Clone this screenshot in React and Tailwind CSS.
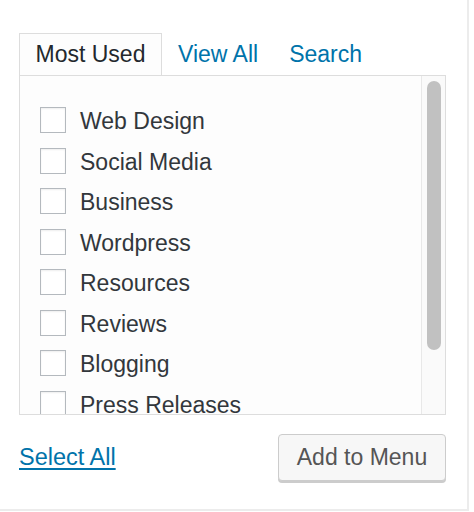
const items = ['Web Design', 'Social Media', 'Business', 'Wordpress', 'Resources', 'Reviews', 'Blogging', 'Press Releases']

export default function App() {
  return (
    <div
      className="w-[467px] h-[509px] bg-white border-r-2 border-b-2 border-[#ececec] box-content"
      style={{ fontFamily: '"Liberation Sans", Arial, sans-serif' }}
    >
      <div className="pt-[34px] pl-[19px] w-[446px]">
        {/* Tabs */}
        <div className="flex items-end h-[41px] text-[23px]">
          <div className="h-[42px] w-[143px] bg-[#fdfdfd] border border-b-0 border-[#dddddd] flex items-center justify-center text-[#23282d] relative z-10">
            Most Used
          </div>
          <div className="h-[41px] flex items-center pl-[16px] text-[#0073aa]">View All</div>
          <div className="h-[41px] flex items-center pl-[31px] text-[#0073aa]">Search</div>
        </div>

        {/* Panel */}
        <div className="h-[340px] bg-[#fdfdfd] border border-[#dddddd] flex overflow-hidden">
          <div className="flex-1 pt-[31px] pl-[20px] flex flex-col gap-[14.5px]">
            {items.map((it) => (
              <div key={it} className="flex items-center gap-[14px] h-[26px] shrink-0">
                <div className="w-[26px] h-[26px] border border-[#b4b9be] bg-white shadow-[inset_0_1px_2px_rgba(0,0,0,0.07)]" />
                <span className="text-[23px] text-[#32373c] leading-none pt-[3px]">{it}</span>
              </div>
            ))}
          </div>
          <div className="w-[24px] border-l border-[#e8e8e8] bg-[#fafafa] pt-[5px] flex justify-center">
            <div className="w-[14px] h-[269px] rounded-full bg-[#c1c1c1]" />
          </div>
        </div>

        {/* Footer */}
        <div className="flex items-center justify-between mt-[19px]">
          <a href="#" className="text-[23.5px] text-[#0073aa] underline underline-offset-[3px]">Select All</a>
          <button className="h-[47px] w-[168px] bg-[#f7f7f7] border border-[#cccccc] rounded-[4px] shadow-[0_2px_0_#cccccc] text-[23px] text-[#555555]">
            Add to Menu
          </button>
        </div>
      </div>
    </div>
  )
}
